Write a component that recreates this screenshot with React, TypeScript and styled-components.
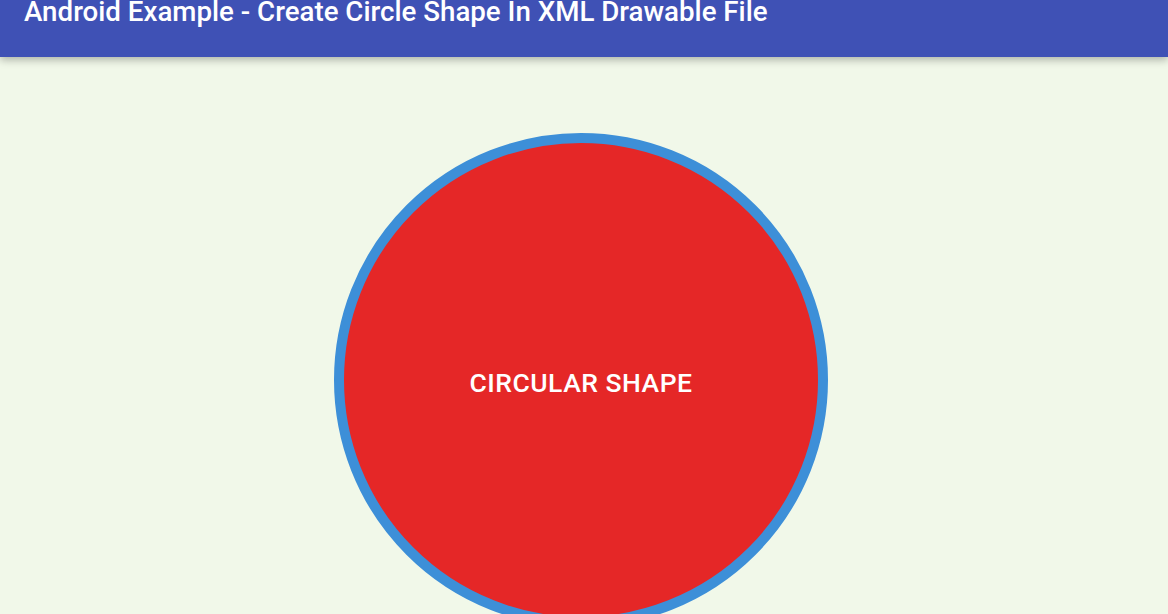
import React from "react";
import styled, { createGlobalStyle } from "styled-components";

const GlobalStyle = createGlobalStyle`
  html, body {
    margin: 0;
    padding: 0;
    height: 100%;
    overflow: hidden;
  }
  body {
    font-family: Roboto, "Noto Sans", sans-serif;
    background: #f1f8e9;
  }
`;

const Screen = styled.div`
  width: 1168px;
  height: 614px;
  display: flex;
  flex-direction: column;
  background: #f1f8e9;
  overflow: hidden;
`;

const Toolbar = styled.header`
  height: 57px;
  flex-shrink: 0;
  background: #3f51b5;
  box-shadow: 0 3px 8px rgba(0, 0, 0, 0.28);
  position: relative;
  z-index: 1;
  display: flex;
  align-items: flex-start;
  padding: 0 24px;
`;

const Title = styled.h1`
  margin: -2px 0 0;
  font-family: Roboto, sans-serif;
  font-size: 27.7px;
  line-height: 27px;
  font-weight: 500;
  color: #ffffff;
  white-space: nowrap;
`;

const Content = styled.main`
  flex: 1;
  display: flex;
  justify-content: center;
  padding-top: 76px;
  padding-right: 6px;
`;

const Circle = styled.div`
  width: 494px;
  height: 494px;
  flex-shrink: 0;
  box-sizing: border-box;
  border-radius: 50%;
  border: 10px solid #3d8fd8;
  background: #e52727;
  display: flex;
  align-items: center;
  justify-content: center;
`;

const Label = styled.span`
  font-family: Roboto, sans-serif;
  font-size: 26.5px;
  font-weight: 500;
  letter-spacing: 0.5px;
  color: #ffffff;
  margin-top: 4px;
`;

export default function App() {
  return (
    <>
      <GlobalStyle />
      <Screen>
        <Toolbar>
          <Title>Android Example - Create Circle Shape In XML Drawable File</Title>
        </Toolbar>
        <Content>
          <Circle>
            <Label>CIRCULAR SHAPE</Label>
          </Circle>
        </Content>
      </Screen>
    </>
  );
}
